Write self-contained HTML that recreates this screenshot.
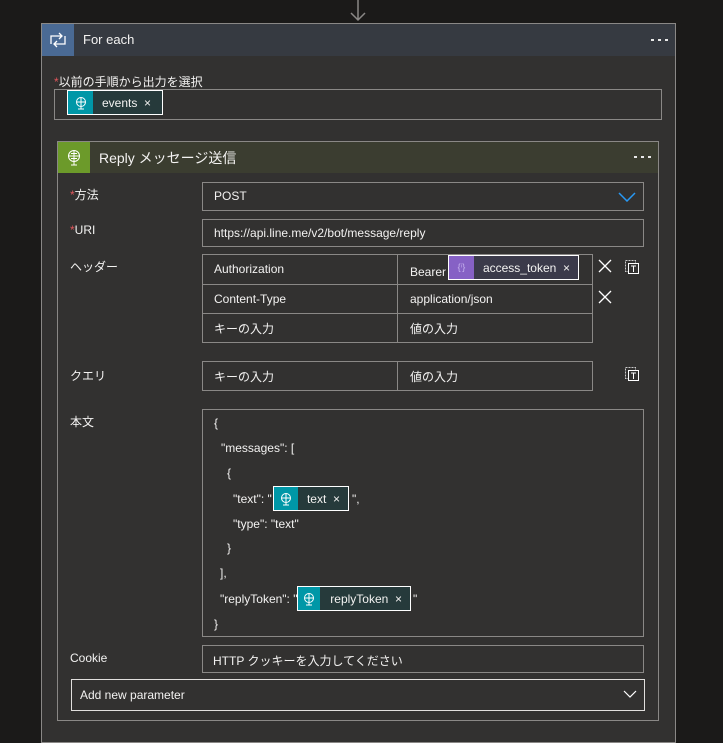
<!DOCTYPE html>
<html><head><meta charset="utf-8"><style>
*{box-sizing:border-box;margin:0;padding:0}
body{width:723px;height:737px;background:#1b1a19;position:relative;overflow:hidden;font-family:"Segoe UI","Liberation Sans","Noto Sans CJK JP",sans-serif;font-size:12px;color:#f3f2f1}
.a{position:absolute}
.box{position:absolute;border:1px solid #8a8886;background:#323130}
.t{position:absolute;white-space:nowrap}
.req{color:#e0565b}
.dots{position:absolute;display:flex;gap:4px}
.dots i{width:3px;height:2px;background:#e8e8e8;display:block}
.tok{position:absolute;height:25px;border:1px solid #fff;background:#263a3b;display:flex;align-items:center}
.tok .ic{width:25px;height:23px;background:#0097a7;display:flex;align-items:center;justify-content:center}
.tok span{padding:0 8px 0 0;}
</style></head><body>
<svg class="a" style="left:348px;top:0" width="20" height="22"><path d="M10 0V20M3 13L10 20L17 13" stroke="#8a8886" stroke-width="1.5" fill="none"/></svg>
<div class="a" style="left:41px;top:23px;width:635px;height:720px;background:#323130;border:1px solid #8a8886"></div>
<div class="a" style="left:42px;top:24px;width:633px;height:32px;background:#363a41"></div>
<div class="a" style="left:42px;top:24px;width:32px;height:32px;background:#4a6a94"></div>
<svg class="a" style="left:48px;top:32px" width="20" height="16"><path d="M3 12V4H14M11 1L14 4L11 7M17 4V12H6M9 9L6 12L9 15" stroke="#fff" stroke-width="1.3" fill="none"/></svg>
<div class="t" style="left:83px;top:32px;font-size:13px">For each</div>
<div class="dots" style="left:651px;top:39px"><i></i><i></i><i></i></div>
<div class="t" style="left:54px;top:73px"><span class="req">*</span>以前の手順から出力を選択</div>
<div class="box" style="left:54px;top:89px;width:608px;height:31px"></div>
<div class="tok" style="left:67px;top:90px;width:96px"><div class="ic"><svg width="14" height="14"><circle cx="7" cy="6" r="4.5" stroke="#fff" fill="none"/><path d="M2.5 6H11.5M7 1.5V10.5M7 11V13M4 13H10" stroke="#fff" fill="none"/></svg></div><span style="padding-left:9px">events&nbsp;&nbsp;×</span></div>

<div class="a" style="left:57px;top:141px;width:602px;height:580px;border:1px solid #8a8886;background:#323130"></div>
<div class="a" style="left:58px;top:142px;width:600px;height:31px;background:#3b3d30"></div>
<div class="a" style="left:58px;top:142px;width:32px;height:31px;background:#6c9a2a"></div>
<svg class="a" style="left:66px;top:149px" width="16" height="18"><circle cx="8" cy="7" r="5.5" stroke="#fff" fill="none"/><path d="M2.5 7H13.5M8 1.5V12.5M5 4.5H11M5 9.5H11M8 13V16M5 16H11" stroke="#fff" fill="none"/></svg>
<div class="t" style="left:99px;top:148px;font-size:14px">Reply メッセージ送信</div>
<div class="dots" style="left:634px;top:156px"><i></i><i></i><i></i></div>

<div class="t" style="left:70px;top:186px"><span class="req">*</span>方法</div>
<div class="box" style="left:202px;top:182px;width:442px;height:29px"></div>
<div class="t" style="left:214px;top:189px">POST</div>
<svg class="a" style="left:618px;top:192px" width="18" height="10"><path d="M1 1L9 9L17 1" stroke="#2899f5" stroke-width="1.5" fill="none"/></svg>

<div class="t" style="left:70px;top:223px"><span class="req">*</span>URI</div>
<div class="box" style="left:202px;top:219px;width:442px;height:28px"></div>
<div class="t" style="left:214px;top:226px">https://api.line.me/v2/bot/message/reply</div>

<div class="t" style="left:70px;top:258px">ヘッダー</div>
<div class="box" style="left:202px;top:254px;width:196px;height:31px"></div>
<div class="box" style="left:397px;top:254px;width:196px;height:31px"></div>
<div class="box" style="left:202px;top:284px;width:196px;height:30px"></div>
<div class="box" style="left:397px;top:284px;width:196px;height:30px"></div>
<div class="box" style="left:202px;top:313px;width:196px;height:30px"></div>
<div class="box" style="left:397px;top:313px;width:196px;height:30px"></div>
<div class="t" style="left:214px;top:262px">Authorization</div>
<div class="t" style="left:410px;top:265px">Bearer</div>
<div class="tok" style="left:448px;top:255px;width:131px;background:#3b3a4a"><div class="ic" style="background:#8661c5;color:#c8b4f0;font-size:9px">{ⁱ}</div><span style="padding-left:9px">access_token&nbsp;&nbsp;×</span></div>
<div class="t" style="left:214px;top:292px">Content-Type</div>
<div class="t" style="left:410px;top:292px">application/json</div>
<div class="t" style="left:214px;top:320px">キーの入力</div>
<div class="t" style="left:410px;top:320px">値の入力</div>
<svg class="a" style="left:598px;top:259px" width="14" height="14"><path d="M1 1L13 13M13 1L1 13" stroke="#fff" stroke-width="1.3"/></svg>
<svg class="a" style="left:598px;top:290px" width="14" height="14"><path d="M1 1L13 13M13 1L1 13" stroke="#fff" stroke-width="1.3"/></svg>
<svg class="a" style="left:624px;top:259px" width="16" height="16"><rect x="1.5" y="1.5" width="10" height="11" stroke="#ccc" stroke-dasharray="2 1" fill="none"/><rect x="4.5" y="4.5" width="10" height="10" stroke="#fff" fill="#323130"/><path d="M7 7H12M9.5 7V13" stroke="#fff"/></svg>

<div class="t" style="left:70px;top:367px">クエリ</div>
<div class="box" style="left:202px;top:361px;width:196px;height:30px"></div>
<div class="box" style="left:397px;top:361px;width:196px;height:30px"></div>
<div class="t" style="left:214px;top:368px">キーの入力</div>
<div class="t" style="left:410px;top:368px">値の入力</div>
<svg class="a" style="left:624px;top:366px" width="16" height="16"><rect x="1.5" y="1.5" width="10" height="11" stroke="#ccc" stroke-dasharray="2 1" fill="none"/><rect x="4.5" y="4.5" width="10" height="10" stroke="#fff" fill="#323130"/><path d="M7 7H12M9.5 7V13" stroke="#fff"/></svg>

<div class="t" style="left:70px;top:413px">本文</div>
<div class="box" style="left:202px;top:409px;width:442px;height:228px"></div>
<div class="t" style="left:214px;top:416px">{</div>
<div class="t" style="left:221px;top:441px">"messages": [</div>
<div class="t" style="left:227px;top:466px">{</div>
<div class="t" style="left:233px;top:492px">"text": "</div>
<div class="tok" style="left:273px;top:486px;width:76px"><div class="ic"><svg width="14" height="14"><circle cx="7" cy="6" r="4.5" stroke="#fff" fill="none"/><path d="M2.5 6H11.5M7 1.5V10.5M7 11V13M4 13H10" stroke="#fff" fill="none"/></svg></div><span style="padding-left:9px">text&nbsp;&nbsp;×</span></div>
<div class="t" style="left:352px;top:492px">",</div>
<div class="t" style="left:233px;top:517px">"type": "text"</div>
<div class="t" style="left:227px;top:541px">}</div>
<div class="t" style="left:220px;top:566px">],</div>
<div class="t" style="left:220px;top:592px">"replyToken": "</div>
<div class="tok" style="left:297px;top:586px;width:114px"><div class="ic"><svg width="14" height="14"><circle cx="7" cy="6" r="4.5" stroke="#fff" fill="none"/><path d="M2.5 6H11.5M7 1.5V10.5M7 11V13M4 13H10" stroke="#fff" fill="none"/></svg></div><span style="padding-left:10px">replyToken&nbsp;&nbsp;×</span></div>
<div class="t" style="left:413px;top:592px">"</div>
<div class="t" style="left:214px;top:617px">}</div>

<div class="t" style="left:70px;top:651px">Cookie</div>
<div class="box" style="left:202px;top:645px;width:442px;height:28px"></div>
<div class="t" style="left:213px;top:652px">HTTP クッキーを入力してください</div>
<div class="box" style="left:71px;top:679px;width:574px;height:32px;border-color:#e1dfdd"></div>
<div class="t" style="left:80px;top:688px">Add new parameter</div>
<svg class="a" style="left:623px;top:690px" width="14" height="8"><path d="M1 1L7 7L13 1" stroke="#fff" stroke-width="1.2" fill="none"/></svg>
</body></html>
